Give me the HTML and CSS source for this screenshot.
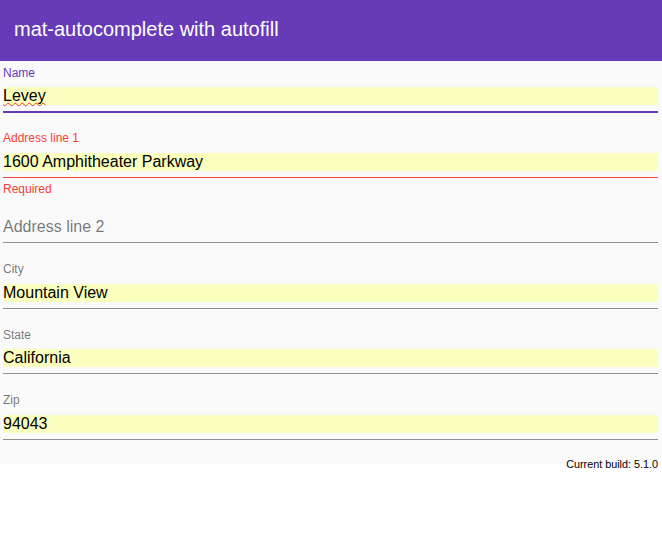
FILE: index.html
```html
<!DOCTYPE html>
<html lang="en">
<head>
<meta charset="utf-8">
<title>mat-autocomplete with autofill</title>
<link rel="stylesheet" href="styles.css">
</head>
<body>
<header class="toolbar"><span class="title">mat-autocomplete with autofill</span></header>
<main class="page">
  <form class="form">
    <div class="field is-focused">
      <div class="label">Name</div>
      <div class="infix"><div class="value autofill"><span class="spell">Levey</span></div></div>
      <div class="underline"></div>
      <div class="subscript"></div>
    </div>
    <div class="field is-invalid">
      <div class="label">Address line 1</div>
      <div class="infix"><div class="value autofill">1600 Amphitheater Parkway</div></div>
      <div class="underline"></div>
      <div class="subscript">Required</div>
    </div>
    <div class="field">
      <div class="label"></div>
      <div class="infix"><div class="value placeholder">Address line 2</div></div>
      <div class="underline"></div>
      <div class="subscript"></div>
    </div>
    <div class="field">
      <div class="label">City</div>
      <div class="infix"><div class="value autofill">Mountain View</div></div>
      <div class="underline"></div>
      <div class="subscript"></div>
    </div>
    <div class="field">
      <div class="label">State</div>
      <div class="infix"><div class="value autofill">California</div></div>
      <div class="underline"></div>
      <div class="subscript"></div>
    </div>
    <div class="field">
      <div class="label">Zip</div>
      <div class="infix"><div class="value autofill">94043</div></div>
      <div class="underline"></div>
      <div class="subscript"></div>
    </div>
  </form>
</main>
<footer class="footer">Current build: 5.1.0</footer>
</body>
</html>
```

FILE: styles.css
```css
html, body {
  margin: 0;
  padding: 0;
  background: #ffffff;
  font-family: "Liberation Sans", Arial, sans-serif;
  color: #000000;
}

.toolbar {
  height: 61px;
  box-sizing: border-box;
  display: flex;
  align-items: center;
  padding: 0 14px 3px 14px;
  background: #673ab7;
  color: #ffffff;
}

.title {
  font-size: 20px;
  line-height: 24px;
  font-weight: 400;
}

.page {
  background: #fafafa;
  padding: 5.5px 4px 4px 3px;
}

.form {
  display: block;
  margin: 0;
}

.field {
  display: block;
}

.label {
  height: 13.5px;
  font-size: 12px;
  line-height: 12px;
  color: rgba(0, 0, 0, 0.54);
  white-space: nowrap;
}

.infix {
  padding: 7px 0 6px 0;
}

.value {
  height: 18px;
  font-size: 16px;
  line-height: 18px;
  white-space: nowrap;
}

.autofill {
  background: rgb(250, 255, 189);
}

.placeholder {
  color: rgba(0, 0, 0, 0.54);
}

.spell {
  text-decoration-line: underline;
  text-decoration-style: wavy;
  text-decoration-color: #e53935;
  text-decoration-thickness: 1px;
  text-underline-offset: 1px;
  text-decoration-skip-ink: none;
}

.underline {
  height: 1px;
  background: rgba(0, 0, 0, 0.42);
}

.subscript {
  height: 20px;
  box-sizing: border-box;
  padding-top: 5px;
  font-size: 12px;
  line-height: 12px;
  color: #f44336;
}

.is-focused .label {
  color: #673ab7;
}

.is-focused .underline {
  height: 2px;
  margin-bottom: -1px;
  background: #673ab7;
}

.is-invalid .label {
  color: #f44336;
}

.is-invalid .underline {
  background: #f44336;
}

.footer {
  margin-top: -6px;
  padding-right: 4px;
  text-align: right;
  font-size: 10.8px;
  line-height: 13px;
}
```
